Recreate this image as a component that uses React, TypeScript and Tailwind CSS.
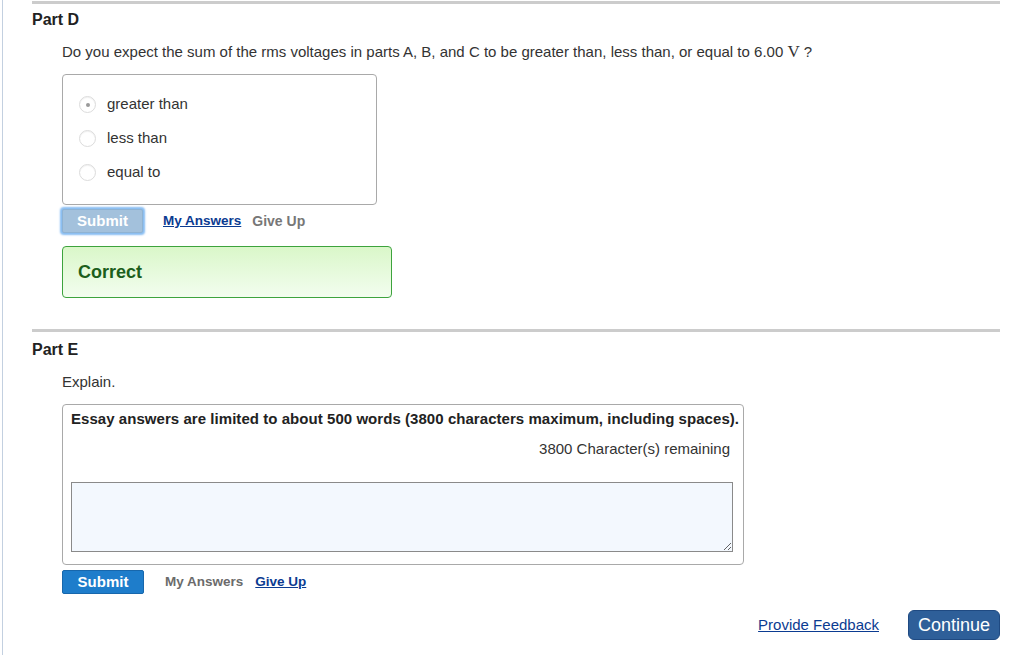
import React from 'react';

const sans = { fontFamily: '"Liberation Sans", Arial, Helvetica, sans-serif' };

const Radio = ({ checked }: { checked?: boolean }) => (
  <span className="flex h-[17px] w-[17px] items-center justify-center rounded-full border border-[#dcdcdc] bg-white shadow-[inset_0_1px_1px_rgba(0,0,0,0.06)]">
    {checked && <span className="h-[4px] w-[4px] rounded-full bg-[#9a9a9a]" />}
  </span>
);

export default function App() {
  const options = ['greater than', 'less than', 'equal to'];
  return (
    <div className="h-[655px] w-full overflow-hidden bg-white text-[#222]" style={sans}>
      <div className="ml-[2px] flex h-full flex-col border-l border-[#c3d0e0] pl-[29px] pr-[24px]">
        {/* Part D */}
        <div className="mt-[1px] h-[3px] bg-[#cccccc]" />
        <h2 className="mt-[7px] text-[16px] font-bold leading-[18px] text-[#222]">Part D</h2>
        <div className="pl-[30px]">
          <p className="mt-[14px] text-[15px] leading-[18px] text-[#333]">
            Do you expect the sum of the rms voltages in parts A, B, and C to be greater than, less than, or equal to 6.00{' '}
            <span className="text-[17px]" style={{ fontFamily: '"Liberation Serif", "Times New Roman", serif' }}>V</span> ?
          </p>

          <div className="mt-[13px] flex h-[131px] w-[315px] flex-col gap-[17px] rounded-[4px] border border-[#a9a9a9] pl-[16px] pt-[21px]">
            {options.map((o, i) => (
              <label key={o} className="flex h-[17px] items-center gap-[11px] text-[15px] text-[#333]">
                <Radio checked={i === 0} />
                <span>{o}</span>
              </label>
            ))}
          </div>

          <div className="mt-[4px] flex items-center">
            <button
              disabled
              className="h-[24px] w-[81px] rounded-[2px] border border-[#8fb3d3] bg-[#a3c1dc] text-[15px] font-bold text-white shadow-[0_0_2px_2px_#86bcf2]"
            >
              Submit
            </button>
            <a href="#" className="ml-[20px] text-[13.5px] font-bold text-[#0b3b91] underline">My Answers</a>
            <span className="ml-[11px] text-[14px] font-bold text-[#777]">Give Up</span>
          </div>

          <div className="mt-[13px] flex h-[52px] w-[330px] items-center rounded-[4px] border border-[#3da33d] bg-gradient-to-b from-[#daf7c9] to-[#f3fdef] pl-[15px]">
            <span className="text-[18px] font-bold text-[#1c5f1c]">Correct</span>
          </div>
        </div>

        {/* Part E */}
        <div className="mt-[31px] h-[3px] bg-[#cccccc]" />
        <h2 className="mt-[9px] text-[16px] font-bold leading-[18px] text-[#222]">Part E</h2>
        <div className="pl-[30px]">
          <p className="mt-[14px] text-[15px] leading-[18px] text-[#333]">Explain.</p>

          <div className="mt-[13px] flex h-[161px] w-[682px] flex-col rounded-[4px] border border-[#a9a9a9] pl-[8px] pr-[10px] pt-[5px]">
            <p className="whitespace-nowrap text-[15px] font-bold leading-[18px] tracking-[0.05px] text-[#222]">
              Essay answers are limited to about 500 words (3800 characters maximum, including spaces).
            </p>
            <p className="mt-[12px] pr-[3px] text-right text-[15px] leading-[18px] text-[#333]">3800 Character(s) remaining</p>
            <textarea className="mt-[24px] h-[70px] w-full resize-y border border-[#8a8a8a] bg-[#f3f8fe] outline-none" />
          </div>

          <div className="mt-[5px] flex items-center">
            <button className="h-[24px] w-[82px] rounded-[2px] border border-[#1767ac] bg-[#1e7dcb] text-[15px] font-bold text-white">
              Submit
            </button>
            <span className="ml-[21px] text-[13.5px] font-bold text-[#6b6b6b]">My Answers</span>
            <a href="#" className="ml-[12px] text-[13.5px] font-bold text-[#0b3b91] underline">Give Up</a>
          </div>
        </div>

        <div className="mt-[16px] flex items-center justify-end">
          <a href="#" className="text-[15px] text-[#0b3b91] underline">Provide Feedback</a>
          <button className="ml-[29px] h-[30px] w-[92px] rounded-[6px] border border-[#1f4a82] bg-[#2e5f99] text-[18px] text-white">
            Continue
          </button>
        </div>
      </div>
    </div>
  );
}
